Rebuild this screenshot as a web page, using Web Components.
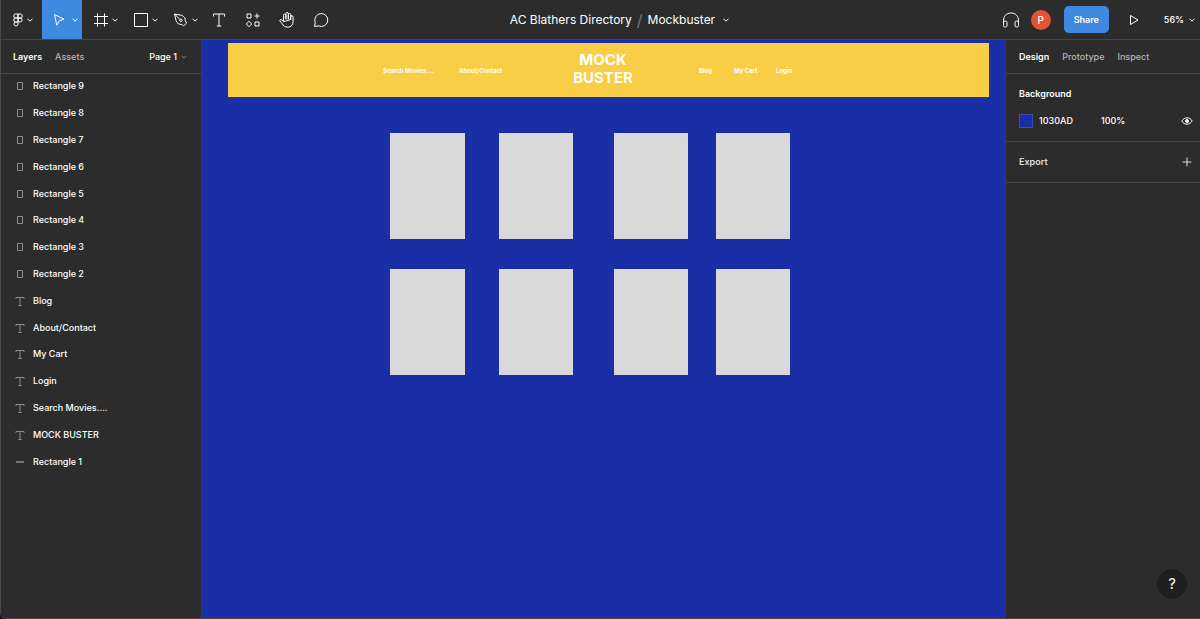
<!DOCTYPE html>
<html lang="en">
<head>
<meta charset="utf-8">
<meta name="viewport" content="width=device-width, initial-scale=1">
<title>Mockbuster</title>
<style>
    html, body {
        margin: 0;
        height: 100%;
    }
    body {
        font: 500 9px/16px Inter, "Liberation Sans", sans-serif;
        color: #fff;
        background: #0d0a20;
        --panel: #2c2c2c;
        --line: #454545;
        --accent: #3f8ae0;
        --muted: #b5b5b5;
    }
</style>
</head>
<body>
<editor-app>
    <editor-toolbar slot="toolbar"></editor-toolbar>
    <layers-panel slot="left">
        <layer-row icon="rect">Rectangle 9</layer-row>
        <layer-row icon="rect">Rectangle 8</layer-row>
        <layer-row icon="rect">Rectangle 7</layer-row>
        <layer-row icon="rect">Rectangle 6</layer-row>
        <layer-row icon="rect">Rectangle 5</layer-row>
        <layer-row icon="rect">Rectangle 4</layer-row>
        <layer-row icon="rect">Rectangle 3</layer-row>
        <layer-row icon="rect">Rectangle 2</layer-row>
        <layer-row icon="text">Blog</layer-row>
        <layer-row icon="text">About/Contact</layer-row>
        <layer-row icon="text">My Cart</layer-row>
        <layer-row icon="text">Login</layer-row>
        <layer-row icon="text">Search Movies....</layer-row>
        <layer-row icon="text">MOCK BUSTER</layer-row>
        <layer-row icon="line">Rectangle 1</layer-row>
    </layers-panel>
    <design-canvas>
        <canvas-node x="26" y="3" w="761" h="54" fill="#f8ce46"></canvas-node>
        <canvas-node x="181" y="27" type="label">Search Movies....</canvas-node>
        <canvas-node x="257" y="27" type="label">About/Contact</canvas-node>
        <canvas-node x="366" y="11" w="70" type="title">MOCK BUSTER</canvas-node>
        <canvas-node x="497" y="27" type="label">Blog</canvas-node>
        <canvas-node x="532" y="27" type="label">My Cart</canvas-node>
        <canvas-node x="574" y="27" type="label">Login</canvas-node>
        <canvas-node x="188" y="93" w="75" h="106" fill="#d9d9d9"></canvas-node>
        <canvas-node x="297" y="93" w="74" h="106" fill="#d9d9d9"></canvas-node>
        <canvas-node x="412" y="93" w="74" h="106" fill="#d9d9d9"></canvas-node>
        <canvas-node x="514" y="93" w="74" h="106" fill="#d9d9d9"></canvas-node>
        <canvas-node x="188" y="229" w="75" h="106" fill="#d9d9d9"></canvas-node>
        <canvas-node x="297" y="229" w="74" h="106" fill="#d9d9d9"></canvas-node>
        <canvas-node x="412" y="229" w="74" h="106" fill="#d9d9d9"></canvas-node>
        <canvas-node x="514" y="229" w="74" h="106" fill="#d9d9d9"></canvas-node>
    </design-canvas>
    <design-panel slot="right"></design-panel>
</editor-app>

<script>
// [width, height, markup]
const ICONS = {
    chevron: [6, 4, '<path d="M.5 .7 3 3.2 5.500 .7"/>'],
    figma: [12, 16, '<path d="M6 2H3.700a2 2 0 0 0 0 4H6zM6 2h2.300a2 2 0 0 1 0 4H6zM6 6H3.700a2 2 0 0 0 0 4H6zM6 10H3.700A2 2 0 1 0 6 12z"/><circle cx="8.100" cy="8" r="2"/>'],
    move: [14, 16, '<path d="M2.500 2.500 12 7.200 7.300 8.800 4.800 13.200z"/>'],
    frame: [16, 16, '<path d="M4.500 1.500v13M11.500 1.500v13M1 4.500h14M1 11.500h14"/>'],
    rectangle: [16, 16, '<rect x="1.500" y="1.500" width="13" height="13"/>'],
    pen: [16, 16, '<path d="M1.500 2 8.500 3.300C11.300 4.200 12.400 6.300 12.300 9L13.700 11 10.700 13.900 8.800 12.500C6 12.500 4 11.300 3.100 8.700zM1.500 2l5.600 5.600"/><circle cx="7.900" cy="8.300" r="1.200"/>'],
    type: [14, 16, '<path d="M1.500 4.500v-2.500h11v2.500M7 2v12M4.800 14h4.400"/>'],
    components: [16, 16, '<rect x="2" y="2" width="4" height="4"/><rect x="10" y="10" width="4" height="4"/><path d="M12 1.500v5M9.500 4h5M4 9.200 6.700 12 4 14.800 1.300 12z"/>'],
    hand: [18, 18, '<path d="M5.500 10V4.200a1.200 1.200 0 0 1 2.400 0V8.500M7.900 8V2.700a1.200 1.200 0 0 1 2.400 0V8.500M10.300 8V3.700a1.200 1.200 0 0 1 2.400 0V9M12.700 8.500V5.900a1.200 1.200 0 0 1 2.400 0v4.600c0 3.500-2.100 5.700-5.300 5.700-2.900 0-4.400-1.400-5.700-3.500L1.900 10c-.5-1.300 1-2 1.900-1.100L5.500 10.700z"/>'],
    comment: [16, 16, '<path d="M1.500 14.500 2.300 10.600A6.500 6.500 0 1 1 5.500 13.900z"/>'],
    headphones: [18, 18, '<path d="M1.500 13V9.500C1.500 5.200 4.500 2 9 2s7.500 3.200 7.500 7.500V13"/><rect x="1.500" y="10" width="3.500" height="6" rx="1.500"/><rect x="13" y="10" width="3.500" height="6" rx="1.500"/>'],
    play: [10, 12, '<path d="M1.500 1.500 9 6 1.500 10.500z"/>'],
    rect: [10, 10, '<rect x="2.500" y="1.500" width="5" height="7"/>'],
    text: [10, 10, '<path d="M1 3V1.500h8V3M5 1.500v8M3.300 9.500h3.400"/>'],
    line: [10, 10, '<path d="M1 5h8" stroke-width="1.500"/>'],
    eye: [12, 10, '<path d="M.8 5C2.200 2.800 4 1.800 6 1.800S9.800 2.800 11.200 5C9.800 7.200 8 8.200 6 8.200S2.200 7.200 .8 5z"/><circle cx="6" cy="5" r="1.500" fill="currentColor"/>'],
    plus: [10, 10, '<path d="M5 .5v9M.5 5h9"/>']
};

const BUTTON_RESET = `
    button {
        margin: 0;
        padding: 0;
        border: 0;
        background: none;
        color: inherit;
        font: inherit;
        display: flex;
        align-items: center;
        white-space: nowrap;
    }
`;

/**
 * Stroked line icon
 * @attr {string} name - Key in ICONS
 */
class EditorIcon extends HTMLElement {
    constructor() {
        super();
        this.attachShadow({ mode: 'open' });
    }

    connectedCallback() {
        const [w, h, markup] = ICONS[this.getAttribute('name')];
        this.shadowRoot.innerHTML = `
            <style>
                :host { display: block; flex: none; }
                svg {
                    display: block;
                    fill: none;
                    stroke: currentColor;
                    stroke-linejoin: round;
                }
            </style>
            <svg width="${w}" height="${h}" viewBox="0 0 ${w} ${h}" aria-hidden="true">${markup}</svg>
        `;
    }
}

/**
 * Toolbar button, with a chevron when it opens a menu
 * @attr {string} icon
 * @attr {string} label
 * @attr {boolean} menu
 * @attr {boolean} active
 */
class ToolButton extends HTMLElement {
    constructor() {
        super();
        this.attachShadow({ mode: 'open' });
    }

    connectedCallback() {
        const menu = this.hasAttribute('menu');
        this.shadowRoot.innerHTML = `
            <style>
                ${BUTTON_RESET}
                :host { display: flex; width: 26px; }
                :host([menu]) { width: 40px; }
                :host([active]) { background: var(--accent); }
                button { flex: 1; justify-content: center; gap: 3px; }
                :host([active]) button { gap: 6px; padding-left: 6px; }
            </style>
            <button aria-label="${this.getAttribute('label')}">
                <editor-icon name="${this.getAttribute('icon')}"></editor-icon>
                ${menu ? '<editor-icon name="chevron"></editor-icon>' : ''}
            </button>
        `;
    }
}

class EditorToolbar extends HTMLElement {
    constructor() {
        super();
        this.attachShadow({ mode: 'open' });
        this.shadowRoot.innerHTML = `
            <style>
                ${BUTTON_RESET}
                :host {
                    display: grid;
                    grid-template-columns: 1fr auto 1fr;
                    height: 39px;
                    border-bottom: 1px solid var(--line);
                    background: var(--panel);
                }
                .tools, .simple, .menus, .title, .actions { display: flex; }
                .tools { padding-left: 1px; }
                .menus { padding-left: 3px; }
                .simple { gap: 8px; padding-left: 1px; }
                .title {
                    align-items: center;
                    gap: 5px;
                    padding-left: 38px;
                    font-size: 12px;
                    font-weight: 400;
                }
                .title button { gap: 8px; }
                .slash { color: #777; font-size: 16px; }
                .actions {
                    align-items: center;
                    justify-content: flex-end;
                    padding-right: 5px;
                }
                .avatar {
                    width: 20px;
                    height: 20px;
                    margin: 0 13px 0 11px;
                    justify-content: center;
                    border-radius: 50%;
                    background: #e35335;
                    font-size: 10px;
                }
                .share {
                    width: 45px;
                    height: 27px;
                    justify-content: center;
                    border-radius: 5px;
                    background: var(--accent);
                    font-weight: 600;
                }
                .play { margin: 0 25px 0 20px; }
                .zoom { gap: 5px; }
            </style>
            <div class="tools">
                <tool-button icon="figma" label="Main menu" menu></tool-button>
                <tool-button icon="move" label="Move" menu active></tool-button>
                <div class="menus">
                    <tool-button icon="frame" label="Frame" menu></tool-button>
                    <tool-button icon="rectangle" label="Shape" menu></tool-button>
                    <tool-button icon="pen" label="Pen" menu></tool-button>
                </div>
                <div class="simple">
                    <tool-button icon="type" label="Type"></tool-button>
                    <tool-button icon="components" label="Resources"></tool-button>
                    <tool-button icon="hand" label="Hand"></tool-button>
                    <tool-button icon="comment" label="Comment"></tool-button>
                </div>
            </div>
            <div class="title">
                <button>AC Blathers Directory</button>
                <span class="slash">/</span>
                <button>Mockbuster <editor-icon name="chevron"></editor-icon></button>
            </div>
            <div class="actions">
                <button aria-label="Audio"><editor-icon name="headphones"></editor-icon></button>
                <button class="avatar">P</button>
                <button class="share">Share</button>
                <button class="play" aria-label="Present"><editor-icon name="play"></editor-icon></button>
                <button class="zoom">56% <editor-icon name="chevron"></editor-icon></button>
            </div>
        `;
    }
}

class LayersPanel extends HTMLElement {
    constructor() {
        super();
        this.attachShadow({ mode: 'open' });
        this.shadowRoot.innerHTML = `
            <style>
                ${BUTTON_RESET}
                :host { display: block; }
                header {
                    display: flex;
                    gap: 13px;
                    height: 33px;
                    padding: 0 14px 0 12px;
                    box-shadow: 0 1px var(--line);
                }
                .selected { font-weight: 600; }
                .tab { color: var(--muted); }
                .page { margin-left: auto; gap: 4px; }
                .page editor-icon { color: #8a8a8a; }
                .rows {
                    display: grid;
                    grid-auto-rows: 1fr;
                    height: 402px;
                }
            </style>
            <header>
                <button class="selected">Layers</button>
                <button class="tab">Assets</button>
                <button class="page">Page 1 <editor-icon name="chevron"></editor-icon></button>
            </header>
            <div class="rows"><slot></slot></div>
        `;
    }
}

/**
 * One entry in the layer list
 * @attr {string} icon
 */
class LayerRow extends HTMLElement {
    constructor() {
        super();
        this.attachShadow({ mode: 'open' });
    }

    connectedCallback() {
        this.shadowRoot.innerHTML = `
            <style>
                :host {
                    display: flex;
                    align-items: center;
                    gap: 8px;
                    padding-left: 14px;
                }
                editor-icon { color: #8c8c8c; }
            </style>
            <editor-icon name="${this.getAttribute('icon')}"></editor-icon>
            <span><slot></slot></span>
        `;
    }
}

class DesignCanvas extends HTMLElement {
    constructor() {
        super();
        this.attachShadow({ mode: 'open' });
        this.shadowRoot.innerHTML = `
            <style>
                :host {
                    display: block;
                    position: relative;
                    overflow: hidden;
                    background: #1a2fa5;
                }
            </style>
            <slot></slot>
        `;
    }
}

/**
 * Item placed freely on the canvas
 * @attr {number} x
 * @attr {number} y
 * @attr {number} w
 * @attr {number} h
 * @attr {string} fill
 * @attr {string} type - "label" or "title" for text
 */
class CanvasNode extends HTMLElement {
    constructor() {
        super();
        this.attachShadow({ mode: 'open' });
    }

    connectedCallback() {
        const px = (name) => this.hasAttribute(name) ? this.getAttribute(name) + 'px' : 'auto';
        this.shadowRoot.innerHTML = `
            <style>
                :host {
                    position: absolute;
                    left: ${px('x')};
                    top: ${px('y')};
                    width: ${px('w')};
                    height: ${px('h')};
                    background: ${this.getAttribute('fill') || 'none'};
                }
                :host([type="label"]) {
                    font-size: 6px;
                    line-height: 8px;
                    font-weight: 700;
                    white-space: nowrap;
                }
                :host([type="title"]) {
                    font-size: 15px;
                    line-height: 18px;
                    font-weight: 700;
                    text-align: center;
                }
            </style>
            <slot></slot>
        `;
    }
}

class DesignPanel extends HTMLElement {
    constructor() {
        super();
        this.attachShadow({ mode: 'open' });
        this.shadowRoot.innerHTML = `
            <style>
                ${BUTTON_RESET}
                :host { display: block; }
                header, section {
                    padding: 0 8px 0 13px;
                    border-bottom: 1px solid var(--line);
                }
                header {
                    display: flex;
                    gap: 13px;
                    height: 33px;
                }
                .selected, h2 { font-weight: 600; }
                .tab { color: var(--muted); }
                h2 { margin: 0; font-size: inherit; }
                .background { padding-top: 12px; padding-bottom: 12px; }
                .fill {
                    display: flex;
                    align-items: center;
                    height: 16px;
                    margin-top: 11px;
                }
                .swatch {
                    width: 14px;
                    height: 14px;
                    margin-right: 6px;
                    border: 1px solid #3a4cb0;
                    background: #1a2fa5;
                }
                input {
                    width: 50px;
                    margin: 0 12px 0 0;
                    padding: 0;
                    border: 0;
                    background: none;
                    color: inherit;
                    font: inherit;
                }
                .opacity { width: 30px; }
                .eye { margin-left: auto; margin-right: -1px; }
                .export {
                    display: flex;
                    align-items: center;
                    justify-content: space-between;
                    height: 40px;
                    color: #dcdcdc;
                }
            </style>
            <header>
                <button class="selected">Design</button>
                <button class="tab">Prototype</button>
                <button class="tab">Inspect</button>
            </header>
            <section class="background">
                <h2>Background</h2>
                <div class="fill">
                    <button class="swatch" aria-label="Pick colour"></button>
                    <input value="1030AD" aria-label="Background colour">
                    <input class="opacity" value="100%" aria-label="Opacity">
                    <button class="eye" aria-label="Toggle visibility"><editor-icon name="eye"></editor-icon></button>
                </div>
            </section>
            <section class="export">
                <h2>Export</h2>
                <button aria-label="Add export"><editor-icon name="plus"></editor-icon></button>
            </section>
        `;
    }
}

class EditorApp extends HTMLElement {
    constructor() {
        super();
        this.attachShadow({ mode: 'open' });
        this.shadowRoot.innerHTML = `
            <style>
                :host {
                    display: flex;
                    flex-direction: column;
                    box-sizing: border-box;
                    min-height: 100vh;
                    border-left: 1px solid #4a4a4a;
                    border-bottom: 1px solid #4a4a4a;
                    border-bottom-left-radius: 6px;
                    overflow: hidden;
                    position: relative;
                }
                main {
                    flex: 1;
                    display: grid;
                    grid-template-columns: 201px 1fr 195px;
                }
                aside { background: var(--panel); }
                .left { border-right: 1px solid #3c3c3c; }
                .right { border-left: 1px solid #3c3c3c; }
                .help {
                    position: absolute;
                    right: 13px;
                    bottom: 19px;
                    width: 30px;
                    height: 30px;
                    padding: 0;
                    border: 0;
                    border-radius: 50%;
                    background: #1e1e1e;
                    color: #fff;
                    font: inherit;
                    font-size: 15px;
                    font-weight: 400;
                }
            </style>
            <slot name="toolbar"></slot>
            <main>
                <aside class="left"><slot name="left"></slot></aside>
                <slot></slot>
                <aside class="right"><slot name="right"></slot></aside>
            </main>
            <button class="help" aria-label="Help">?</button>
        `;
    }
}

customElements.define('editor-icon', EditorIcon);
customElements.define('tool-button', ToolButton);
customElements.define('editor-toolbar', EditorToolbar);
customElements.define('layer-row', LayerRow);
customElements.define('layers-panel', LayersPanel);
customElements.define('canvas-node', CanvasNode);
customElements.define('design-canvas', DesignCanvas);
customElements.define('design-panel', DesignPanel);
customElements.define('editor-app', EditorApp);
</script>
</body>
</html>
